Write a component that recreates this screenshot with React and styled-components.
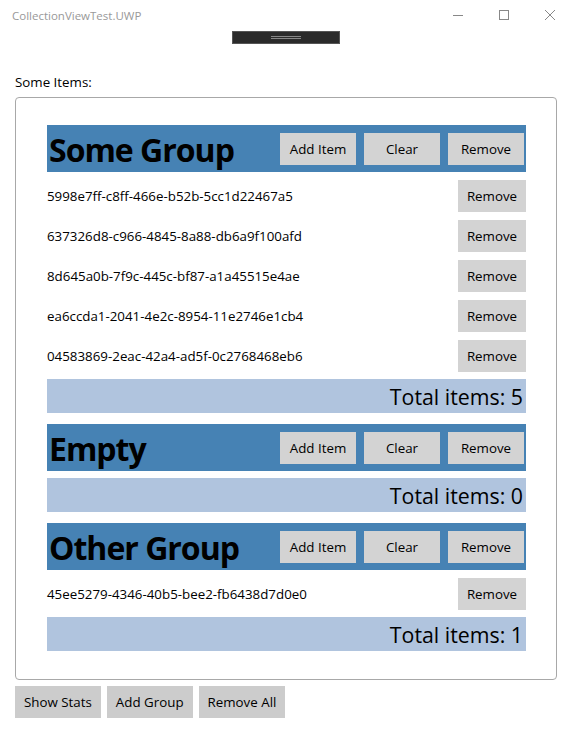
import React from 'react';
import styled, { createGlobalStyle } from 'styled-components';

const GlobalStyle = createGlobalStyle`
  html, body {
    margin: 0;
    padding: 0;
    background: #fff;
    font-family: "Segoe UI", "Open Sans", sans-serif;
    color: #000;
  }
`;

const groups = [
  {
    name: 'Some Group',
    items: [
      '5998e7ff-c8ff-466e-b52b-5cc1d22467a5',
      '637326d8-c966-4845-8a88-db6a9f100afd',
      '8d645a0b-7f9c-445c-bf87-a1a45515e4ae',
      'ea6ccda1-2041-4e2c-8954-11e2746e1cb4',
      '04583869-2eac-42a4-ad5f-0c2768468eb6',
    ],
  },
  { name: 'Empty', items: [] },
  { name: 'Other Group', items: ['45ee5279-4346-40b5-bee2-fb6438d7d0e0'] },
];

const Window = styled.div`
  position: relative;
  width: 573px;
  height: 735px;
  overflow: hidden;
`;

const TitleBar = styled.div`
  display: flex;
  align-items: center;
  height: 30px;
  padding-left: 12px;
  font-size: 11.5px;
  color: #999;
`;

const Caption = styled.div`
  margin-left: auto;
  display: flex;
  height: 100%;
`;

const CaptionButton = styled.div`
  width: 46px;
  height: 100%;
  display: flex;
  align-items: center;
  justify-content: center;
`;

const DebugBar = styled.div`
  position: absolute;
  top: 31px;
  left: 232px;
  width: 106px;
  height: 11px;
  background: #2b2b2b;
  border: 1px solid #555;
  display: flex;
  align-items: center;
  justify-content: center;
  &::before {
    content: '';
    width: 30px;
    height: 1px;
    border-top: 1px solid #888;
    border-bottom: 1px solid #888;
  }
`;

const Main = styled.div`
  padding: 42px 16px 0 15px;
`;

const Label = styled.div`
  font-size: 13.33px;
  line-height: 20px;
  margin-bottom: 5px;
`;

const Panel = styled.div`
  border: 1px solid #a8a8a8;
  border-radius: 4px;
  padding: 27px 30px 28px 31px;
`;

const Group = styled.div`
  display: flex;
  flex-direction: column;
  margin-bottom: 11px;
  &:last-child {
    margin-bottom: 0;
  }
`;

const Header = styled.div`
  display: flex;
  align-items: center;
  height: 47px;
  background: #4682b4;
  padding: 0 2px;
  margin-bottom: 8px;
  gap: 8px;
`;

const GroupTitle = styled.h2`
  margin: 3px auto 0 0;
  font-size: 32px;
  letter-spacing: -1px;
  font-weight: 700;
  line-height: 1;
`;

const Button = styled.button`
  font-family: inherit;
  font-size: 13.33px;
  color: #000;
  border: none;
  border-radius: 0;
  height: 32px;
  white-space: nowrap;
  padding: 0 ${({ $w }) => ($w ? 0 : 9)}px;
  width: ${({ $w }) => ($w ? `${$w}px` : 'auto')};
  background: ${({ $light }) => ($light ? '#d3d3d3' : '#cccccc')};
  cursor: pointer;
`;

const Row = styled.div`
  display: flex;
  align-items: center;
  justify-content: space-between;
  height: 32px;
  margin-bottom: 8px;
  font-size: 13.33px;
`;

const Footer = styled.div`
  height: 34px;
  margin-top: -1px;
  background: #b0c4de;
  font-size: 21.33px;
  line-height: 35px;
  text-align: right;
  padding-right: 3px;
`;

const Toolbar = styled.div`
  display: flex;
  gap: 6px;
  margin-top: 6px;
`;

const App = () => (
  <Window>
    <GlobalStyle />
    <TitleBar>
      CollectionViewTest.UWP
      <Caption>
        <CaptionButton>
          <svg width="10" height="10" viewBox="0 0 10 10">
            <path d="M0 5.5h10" stroke="#888" strokeWidth="1" />
          </svg>
        </CaptionButton>
        <CaptionButton>
          <svg width="10" height="10" viewBox="0 0 10 10">
            <rect x="0.5" y="0.5" width="9" height="9" fill="none" stroke="#888" strokeWidth="1" />
          </svg>
        </CaptionButton>
        <CaptionButton>
          <svg width="10" height="10" viewBox="0 0 10 10">
            <path d="M0 0l10 10M10 0L0 10" stroke="#888" strokeWidth="1" />
          </svg>
        </CaptionButton>
      </Caption>
    </TitleBar>
    <DebugBar />
    <Main>
      <Label>Some Items:</Label>
      <Panel>
        {groups.map((g) => (
          <Group key={g.name}>
            <Header>
              <GroupTitle>{g.name}</GroupTitle>
              <Button $light $w={76}>Add Item</Button>
              <Button $light $w={76}>Clear</Button>
              <Button $light $w={76}>Remove</Button>
            </Header>
            {g.items.map((id) => (
              <Row key={id}>
                {id}
                <Button $light $w={68}>Remove</Button>
              </Row>
            ))}
            <Footer>Total items: {g.items.length}</Footer>
          </Group>
        ))}
      </Panel>
      <Toolbar>
        <Button>Show Stats</Button>
        <Button>Add Group</Button>
        <Button>Remove All</Button>
      </Toolbar>
    </Main>
  </Window>
);

export default App;
